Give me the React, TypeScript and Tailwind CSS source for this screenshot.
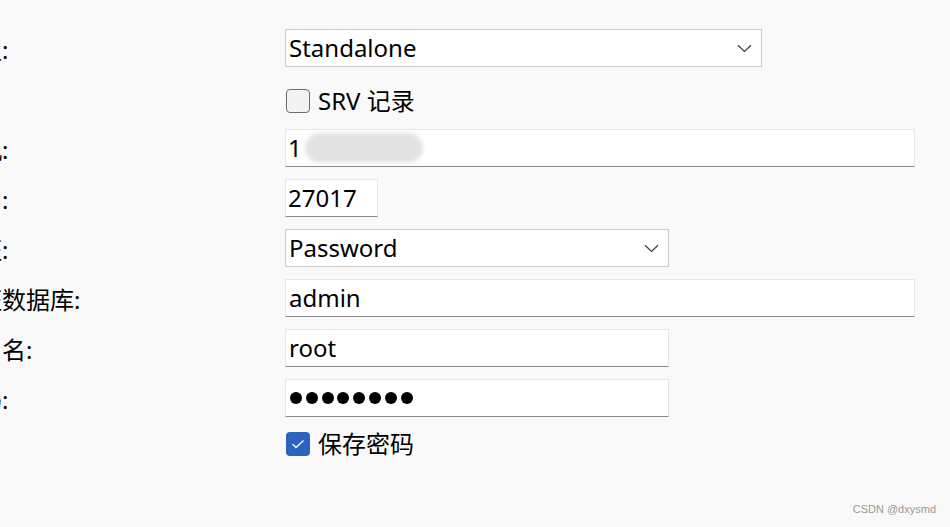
import React from "react";

const font = { fontFamily: '"Noto Sans", "Noto Sans CJK SC", sans-serif' };

function Chevron() {
  return (
    <svg width="15" height="9" viewBox="0 0 15 9" className="shrink-0">
      <path d="M1 1.2 L7.5 7.5 L14 1.2" fill="none" stroke="#3a3a3a" strokeWidth="1.2" />
    </svg>
  );
}

function SelectBox({ value, width }: { value: string; width: string }) {
  return (
    <div className={`${width} h-[38px] flex items-center justify-between bg-white border border-[#cbcbcb] pl-[3px] pr-[9px]`}>
      <span className="leading-none">{value}</span>
      <Chevron />
    </div>
  );
}

function TextBox({ width, children }: { width: string; children: React.ReactNode }) {
  return (
    <div
      className={`${width} h-[38px] flex items-center bg-white border border-[#e6e6e6] border-b-[#8a8a8a] pl-[2px] overflow-hidden`}
    >
      {children}
    </div>
  );
}

function Check({ checked, label, pad }: { checked: boolean; label: string; pad: string }) {
  return (
    <div className={`h-[38px] flex items-start gap-[8px] pl-[1px] ${pad}`}>
      {checked ? (
        <span className="w-[24px] h-[24px] rounded-[4px] bg-[#2b64bf] flex items-center justify-center">
          <svg width="14" height="10" viewBox="0 0 14 10">
            <path d="M1.5 5 L5 8.5 L12.5 1.5" fill="none" stroke="#fff" strokeWidth="1.3" />
          </svg>
        </span>
      ) : (
        <span className="w-[24px] h-[24px] rounded-[4px] bg-[#f3f3f3] border border-[#6b6b6b]" />
      )}
      <span className="leading-[24px]">{label}</span>
    </div>
  );
}

export default function App() {
  const rows: { label: string; control: React.ReactNode }[] = [
    { label: "类型:", control: <SelectBox value="Standalone" width="w-[477px]" /> },
    { label: "", control: <Check checked={false} label="SRV 记录" pad="pt-[10px]" /> },
    {
      label: "主机:",
      control: (
        <TextBox width="w-[630px]">
          <span className="leading-none">1</span>
          <span className="ml-[3px] w-[118px] h-[30px] rounded-full bg-[#e2e2e2] blur-[2px]" />
        </TextBox>
      ),
    },
    {
      label: "端口:",
      control: (
        <TextBox width="w-[93px]">
          <span className="leading-none">27017</span>
        </TextBox>
      ),
    },
    { label: "验证:", control: <SelectBox value="Password" width="w-[384px]" /> },
    {
      label: "验证数据库:",
      control: (
        <TextBox width="w-[630px]">
          <span className="leading-none pl-[1px]">admin</span>
        </TextBox>
      ),
    },
    {
      label: "用户名:",
      control: (
        <TextBox width="w-[384px]">
          <span className="leading-none pl-[1px]">root</span>
        </TextBox>
      ),
    },
    {
      label: "密码:",
      control: (
        <TextBox width="w-[384px]">
          <div className="flex gap-[3.8px] pl-[2px]">
            {Array.from({ length: 8 }).map((_, i) => (
              <span key={i} className="w-[12px] h-[12px] rounded-full bg-black" />
            ))}
          </div>
        </TextBox>
      ),
    },
    { label: "", control: <Check checked={true} label="保存密码" pad="pt-[3px]" /> },
  ];

  return (
    <div className="w-[950px] h-[527px] bg-[#f9f9f9] text-black overflow-hidden relative text-[24px]" style={font}>
      <div className="ml-[-46px] pt-[29px] grid grid-cols-[331px_1fr] gap-y-[12px]">
        {rows.map((r, i) => (
          <React.Fragment key={i}>
            <div className="h-[38px] flex items-center leading-none pt-[4px]">{r.label}</div>
            <div>{r.control}</div>
          </React.Fragment>
        ))}
      </div>
      <div className="absolute right-[14px] bottom-[10px] text-[11px] text-[#9a9a9a]" style={{ fontFamily: '"Liberation Sans", sans-serif' }}>
        CSDN @dxysmd
      </div>
    </div>
  );
}
